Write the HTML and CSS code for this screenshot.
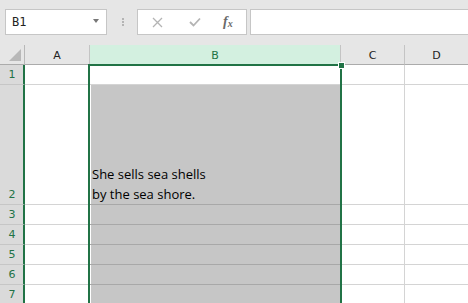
FILE: index.html
```html
<!DOCTYPE html>
<html>
<head>
<meta charset="utf-8">
<link rel="stylesheet" href="styles.css">
</head>
<body>
<div class="app">
  <div class="fbar">
    <div class="namebox">
      <span class="name">B1</span>
      <span class="caret"></span>
    </div>
    <div class="grip"><i></i><i></i><i></i></div>
    <div class="btns">
      <svg class="ic" width="11" height="11" viewBox="0 0 11 11"><path d="M1 1 L10 10 M10 1 L1 10" stroke="#b4b4b4" stroke-width="1.3" fill="none"/></svg>
      <svg class="ic" width="12" height="10" viewBox="0 0 12 10"><path d="M1 5 L4.5 8.5 L11 1.5" stroke="#b4b4b4" stroke-width="1.8" fill="none"/></svg>
      <span class="fx">f<sub>x</sub></span>
    </div>
    <div class="input"></div>
  </div>
  <div class="sheet">
    <div class="grid">
      <div class="corner"><span class="tri"></span></div>
      <div class="ch">A</div>
      <div class="ch sel">B</div>
      <div class="ch">C</div>
      <div class="ch">D</div>

      <div class="rh">1</div>
      <div class="c"></div>
      <div class="c b1"></div>
      <div class="c"></div>
      <div class="c"></div>

      <div class="rh">2</div>
      <div class="c"></div>
      <div class="c g txt">She sells sea shells<br>by the sea shore.</div>
      <div class="c"></div>
      <div class="c"></div>

      <div class="rh">3</div>
      <div class="c"></div>
      <div class="c g"></div>
      <div class="c"></div>
      <div class="c"></div>

      <div class="rh">4</div>
      <div class="c"></div>
      <div class="c g"></div>
      <div class="c"></div>
      <div class="c"></div>

      <div class="rh">5</div>
      <div class="c"></div>
      <div class="c g"></div>
      <div class="c"></div>
      <div class="c"></div>

      <div class="rh">6</div>
      <div class="c"></div>
      <div class="c g"></div>
      <div class="c"></div>
      <div class="c"></div>

      <div class="rh">7</div>
      <div class="c"></div>
      <div class="c g"></div>
      <div class="c"></div>
      <div class="c"></div>
    </div>
    <div class="selection"><span class="handle"></span></div>
  </div>
</div>
</body>
</html>
```
FILE: styles.css
```css
* { box-sizing: border-box; }
html, body { margin: 0; padding: 0; }
body {
  width: 468px;
  height: 303px;
  overflow: hidden;
  background: #ffffff;
  font-family: "Liberation Sans", Arial, sans-serif;
}
.app { width: 468px; height: 303px; overflow: hidden; }

.fbar {
  height: 45px;
  background: #e6e6e6;
  display: flex;
  align-items: flex-start;
  padding: 9px 0 0 5px;
}
.namebox {
  width: 102px;
  height: 26px;
  background: #fff;
  border: 1px solid #c6c6c6;
  display: flex;
  align-items: center;
  justify-content: space-between;
  padding: 0 7px 0 6px;
}
.name {
  font-family: "DejaVu Sans Mono", monospace;
  font-size: 12px;
  color: #222;
}
.caret {
  width: 0; height: 0;
  border-left: 3.5px solid transparent;
  border-right: 3.5px solid transparent;
  border-top: 4px solid #777;
  margin-top: -2px;
}
.grip {
  width: 3px;
  margin: 9px 13px 0 14px;
  display: flex;
  flex-direction: column;
  gap: 1px;
}
.grip i { display: block; width: 2px; height: 2px; background: #b4b4b4; margin-left: 1px; }
.btns {
  width: 110px;
  height: 26px;
  background: #fff;
  border: 1px solid #c6c6c6;
  display: flex;
  align-items: center;
  padding-left: 14px;
  gap: 0;
}
.btns .ic:nth-child(1) { margin-right: 26px; }
.btns .ic:nth-child(2) { margin-right: 22px; }
.fx {
  font-family: "Liberation Serif", serif;
  font-style: italic;
  font-size: 14px;
  color: #6a6a6a;
  font-weight: bold;
  line-height: 1;
}
.fx sub { font-size: 10px; vertical-align: -1px; }
.input {
  flex: 1;
  height: 26px;
  margin-left: 3px;
  background: #fff;
  border: 1px solid #c6c6c6;
  border-right: none;
}

.sheet { position: relative; }
.grid {
  display: grid;
  grid-template-columns: 25px 65px 251px 64px 64px;
  grid-template-rows: 20px 20px 120px 20px 20px 20px 20px 20px;
}
.corner {
  background: #e6e6e6;
  border-right: 1px solid #b8b8b8;
  border-bottom: 1px solid #ababab;
  position: relative;
}
.tri {
  position: absolute;
  right: 3px;
  bottom: 3px;
  width: 0; height: 0;
  border-left: 12px solid transparent;
  border-bottom: 12px solid #b8b8b8;
}
.ch {
  background: #e6e6e6;
  border-right: 1px solid #c4c4c4;
  border-bottom: 1px solid #ababab;
  font-family: "DejaVu Sans", sans-serif;
  font-size: 11px;
  color: #222;
  display: flex;
  align-items: center;
  justify-content: center;
  padding-top: 1px;
}
.ch.sel { background: #d3f0e0; color: #217346; }
.rh {
  background: #dadada;
  border-right: 2px solid #217346;
  border-bottom: 1px solid #c6c6c6;
  font-family: "DejaVu Sans", sans-serif;
  font-size: 11px;
  color: #217346;
  display: flex;
  align-items: flex-end;
  justify-content: center;
  padding-bottom: 3px;
  padding-left: 1px;
}
.c {
  border-right: 1px solid #d4d4d4;
  border-bottom: 1px solid #d4d4d4;
  background: #fff;
}
.c.g {
  background: #c6c6c6;
  border-bottom-color: #a8a8a8;
  box-shadow: inset 1px 0 0 #fff;
}
.txt {
  display: flex;
  flex-direction: column;
  justify-content: flex-end;
  font-family: "Open Sans", sans-serif;
  font-size: 13px;
  line-height: 20px;
  color: #000;
  padding: 0 0 0 2px;
}
.selection {
  position: absolute;
  left: 88px;
  top: 19px;
  width: 254px;
  height: 300px;
  border: 2px solid #217346;
  pointer-events: none;
}
.handle {
  position: absolute;
  right: -4px;
  top: -3px;
  width: 5px;
  height: 5px;
  background: #217346;
  box-shadow: 0 0 0 1px #fff;
}
```
